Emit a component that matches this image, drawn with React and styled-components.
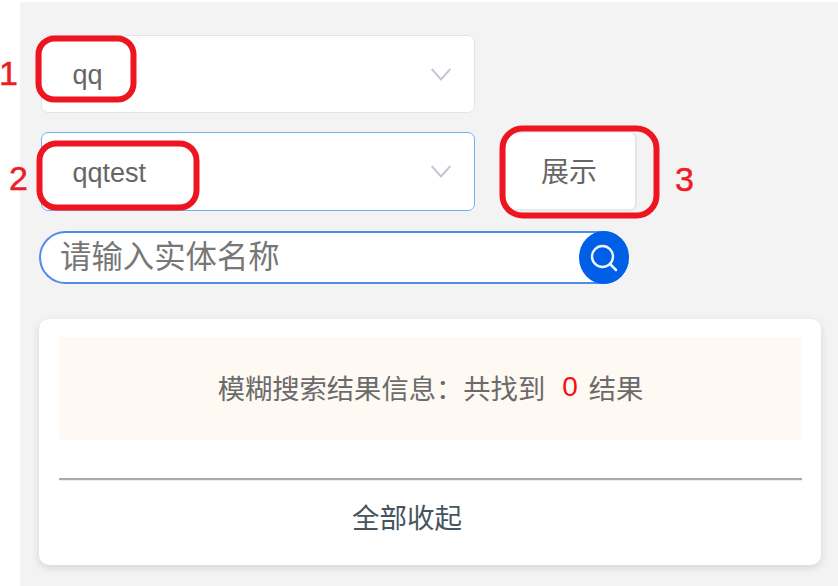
import React from 'react';
import styled, { createGlobalStyle } from 'styled-components';

const GlobalStyle = createGlobalStyle`
  html, body {
    margin: 0;
    padding: 0;
    background: #fff;
    font-family: "Liberation Sans", "Noto Sans CJK SC", sans-serif;
  }
  * {
    box-sizing: border-box;
  }
`;

const Page = styled.div`
  position: relative;
  width: 838px;
  height: 586px;
  overflow: hidden;
  padding: 2px 0 0 20px;
`;

const Panel = styled.div`
  height: 584px;
  background: #f3f3f3;
  padding: 33px 17px 0 19px;
  display: flex;
  flex-direction: column;
`;

const Row = styled.div`
  display: flex;
  gap: 30px;
  margin-bottom: ${(p) => p.$gap}px;
`;

const Select = styled.div`
  width: 434px;
  height: ${(p) => p.$h}px;
  margin-left: 2px;
  padding: 0 23px 0 30.5px;
  display: flex;
  align-items: center;
  justify-content: space-between;
  background: #fff;
  border: 1px solid ${(p) => (p.$active ? '#70b1f7' : '#e2e4ec')};
  border-radius: 7px;
  font-size: 27px;
  color: #666;
`;

const SelectText = styled.span`
  position: relative;
  top: ${(p) => p.$top}px;
`;

const ShowButton = styled.button`
  width: 132px;
  height: 79px;
  background: #fff;
  border: 1px solid #eceef2;
  border-right: 2px solid #e4e5ec;
  border-bottom: 2px solid #e9eaf0;
  border-radius: 7px;
  font: inherit;
  font-size: 28px;
  color: #666;
  padding: 0 3px 2px 0;
`;

const SearchBar = styled.div`
  width: 590px;
  height: 53px;
  margin-bottom: 35px;
  padding-left: 19px;
  display: flex;
  align-items: center;
  justify-content: space-between;
  background: #fff;
  border: 2px solid #4f8de8;
  border-right: none;
  border-radius: 27px;
  font-size: 31.4px;
  color: #777;
`;

const Placeholder = styled.span`
  position: relative;
  top: -3px;
`;

const SearchButton = styled.div`
  width: 50px;
  height: 53px;
  margin-top: -2px;
  margin-bottom: -2px;
  display: flex;
  align-items: center;
  justify-content: center;
  border-radius: 50%;
  background: #005fe7;
`;

const Card = styled.div`
  width: 782px;
  height: 246px;
  padding: 18px 19px 0 20px;
  background: #fff;
  border-radius: 10px;
  box-shadow: 0 3px 8px rgba(0, 0, 0, 0.12);
`;

const Notice = styled.div`
  height: 103px;
  padding-bottom: 3px;
  display: flex;
  align-items: center;
  justify-content: center;
  background: #fef9f3;
  font-size: 27.3px;
  color: #6b6b6b;
`;

const Count = styled.span`
  margin: 0 11px 0 17px;
  font-size: 28px;
  color: #fb0a16;
`;

const Divider = styled.div`
  height: 3px;
  margin-top: 38px;
  background: #a9a9a9;
  border-bottom: 1px solid #eee;
`;

const Collapse = styled.div`
  margin-top: 18px;
  padding-right: 47px;
  text-align: center;
  font-size: 27.5px;
  line-height: 40px;
  color: #46545f;
`;

// red marks drawn over the screenshot
const Mark = styled.svg`
  position: absolute;
  left: 0;
  top: 0;
  pointer-events: none;
`;

const Num = styled.span`
  position: absolute;
  left: ${(p) => p.$x}px;
  top: ${(p) => p.$y}px;
  font-size: 34px;
  line-height: 34px;
  color: #ee1c25;
  -webkit-text-stroke: 0.5px #ee1c25;
`;

const Chevron = () => (
  <svg width="20" height="13" viewBox="0 0 20 13" fill="none">
    <path d="M0.7 1 L10 11.5 L19.3 1" stroke="#c3c8d2" strokeWidth="2" />
  </svg>
);

const SearchIcon = () => (
  <svg width="30" height="30" viewBox="0 0 30 30" fill="none">
    <circle cx="13.5" cy="13.5" r="10.5" stroke="#eef5ff" strokeWidth="2.4" />
    <path d="M21.5 21.5 L27 27" stroke="#eef5ff" strokeWidth="2.6" strokeLinecap="round" />
  </svg>
);

export default function App() {
  return (
    <Page>
      <GlobalStyle />
      <Panel>
        <Row $gap={19}>
          <Select $h={78}>
            <SelectText $top={1}>qq</SelectText>
            <Chevron />
          </Select>
        </Row>
        <Row $gap={20}>
          <Select $h={79} $active>
            <SelectText $top={2}>qqtest</SelectText>
            <Chevron />
          </Select>
          <ShowButton>展示</ShowButton>
        </Row>
        <SearchBar>
          <Placeholder>请输入实体名称</Placeholder>
          <SearchButton>
            <SearchIcon />
          </SearchButton>
        </SearchBar>
        <Card>
          <Notice>
            {'模糊搜索结果信息\uFF1A共找到'}
            <Count>0</Count>
            结果
          </Notice>
          <Divider />
          <Collapse>全部收起</Collapse>
        </Card>
      </Panel>
      <Mark width="838" height="586" fill="none" stroke="#ee1520" strokeWidth="6">
        <rect x="38.5" y="38.5" width="95" height="61" rx="16" />
        <rect x="39.5" y="143.5" width="157" height="64" rx="17" />
        <rect x="502.5" y="128.5" width="154" height="87" rx="20" />
      </Mark>
      <Num $x={-1} $y={56}>1</Num>
      <Num $x={9} $y={161}>2</Num>
      <Num $x={675} $y={162}>3</Num>
    </Page>
  );
}
